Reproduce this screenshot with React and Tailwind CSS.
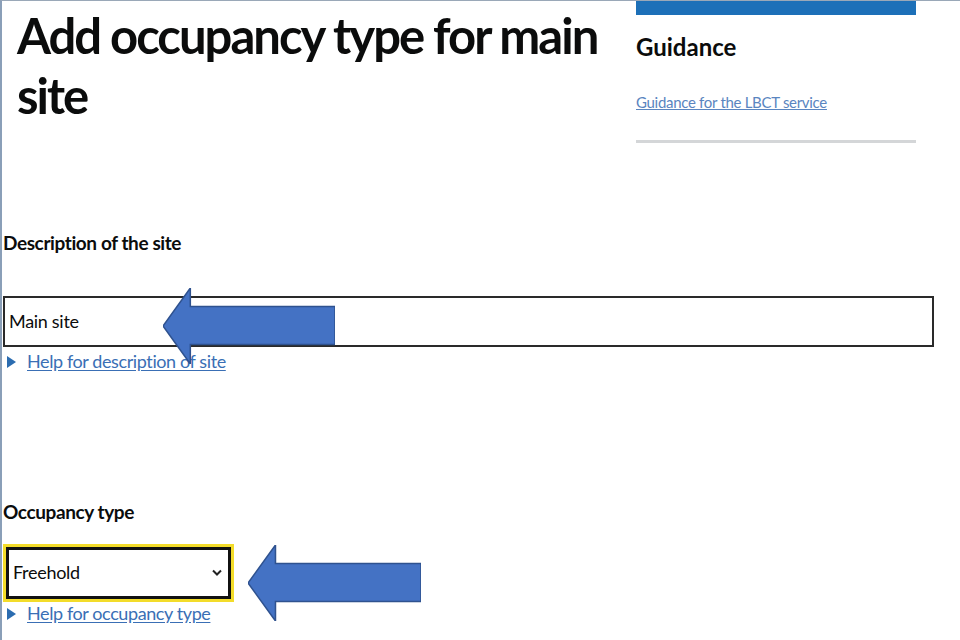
import React from "react";

const font = { fontFamily: "Lato, 'Noto Sans', Arial, sans-serif" };

const LeftArrow = ({ className }) => (
  <svg className={className} viewBox="0 0 170 74" preserveAspectRatio="none">
    <polygon
      points="0,37 27,0 27,18 170,18 170,55 27,55 27,74"
      fill="#4472c4"
      stroke="#2f528f"
      strokeWidth="1.5"
    />
  </svg>
);

const HelpLink = ({ text }) => (
  <div className="flex items-center h-6">
    <span className="w-0 h-0 ml-[4px] border-y-[6px] border-y-transparent border-l-[9px] border-l-[#2b6cb0]" />
    <a
      href="#"
      className="ml-[11px] text-[18px] text-[#3a6fb5] underline underline-offset-2 tracking-[-0.4px]"
    >
      {text}
    </a>
  </div>
);

const App = () => {
  return (
    <div
      className="relative w-[960px] h-[640px] overflow-hidden bg-white border-l-2 border-t border-l-[#8a9fb8] border-t-[#9aa8b8] text-[#0b0c0c]"
      style={font}
    >
      <div className="flex items-start">
        <h1 className="ml-[15px] mt-[4px] w-[610px] text-[49px] leading-[60px] font-bold tracking-[-2px]">
          Add occupancy type for main site
        </h1>
        <aside className="ml-[9px] w-[280px]">
          <div className="h-[14px] bg-[#1d70b8]" />
          <h2 className="mt-[16px] text-[24px] font-bold leading-[32px]">Guidance</h2>
          <a
            href="#"
            className="block mt-[28px] text-[15px] text-[#5a85c0] underline tracking-[-0.3px]"
          >
            Guidance for the LBCT service
          </a>
          <div className="mt-[26px] h-[3px] bg-[#d4d6d8]" />
        </aside>
      </div>

      <div className="mt-[88px] pl-px">
        <label className="block text-[19px] font-bold leading-6 tracking-[-0.4px]">
          Description of the site
        </label>
        <div className="relative mt-[41px] w-[931px] h-[51px] border-2 border-[#2a2a2a] flex items-center px-[4px]">
          <span className="text-[18px] tracking-[-0.3px]">Main site</span>
        </div>
        <div className="mt-[3px]">
          <HelpLink text="Help for description of site" />
        </div>

        <label className="block mt-[126px] text-[19px] font-bold leading-6 tracking-[-0.4px]">
          Occupancy type
        </label>
        <div className="mt-[20px] w-[231px] h-[58px] border-[3px] border-[#f3dc2a] p-0">
          <div className="h-full border-[3px] border-[#111] flex items-center justify-between pl-[4px] pr-[6px] bg-white">
            <span className="text-[18px] tracking-[-0.3px]">Freehold</span>
            <svg width="10" height="7" viewBox="0 0 10 7">
              <path d="M1 1.5 L5 5.5 L9 1.5" fill="none" stroke="#222" strokeWidth="2" />
            </svg>
          </div>
        </div>
        <HelpLink text="Help for occupancy type" />
      </div>

      <LeftArrow className="absolute left-[161px] top-[287px] w-[172px] h-[76px]" />
      <LeftArrow className="absolute left-[246px] top-[544px] w-[173px] h-[76px]" />
    </div>
  );
};

export default App;
